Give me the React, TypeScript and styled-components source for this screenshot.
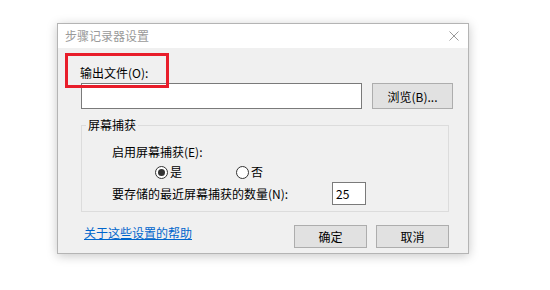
import styled, { createGlobalStyle } from 'styled-components';

const GlobalStyle = createGlobalStyle`
  html, body {
    margin: 0;
    padding: 0;
    background: #ffffff;
  }
  body {
    font-family: "Noto Sans CJK SC", "Noto Sans", sans-serif;
    font-size: 12px;
    color: #000000;
  }
`;

const App: React.FC = () => {
  return (
    <>
      <GlobalStyle />
      <Page>
        <Dialog>
          <TitleBar>
            <Title>步骤记录器设置</Title>
            <CloseIcon viewBox="0 0 10 10">
              <path d="M0.5 0.5 L9.5 9.5 M9.5 0.5 L0.5 9.5" />
            </CloseIcon>
          </TitleBar>

          <Body>
            <OutputLabel>
              输出文件(O):
              <Highlight />
            </OutputLabel>
            <FileRow>
              <TextBox />
              <BrowseButton>浏览(B)...</BrowseButton>
            </FileRow>

            <Group>
              <Legend>屏幕捕获</Legend>
              <GroupContent>
                <GroupLabel>启用屏幕捕获(E):</GroupLabel>
                <RadioRow>
                  <RadioOption>
                    <RadioCircle $checked />是
                  </RadioOption>
                  <RadioOption>
                    <RadioCircle />否
                  </RadioOption>
                </RadioRow>
                <CountRow>
                  <GroupLabel>要存储的最近屏幕捕获的数量(N):</GroupLabel>
                  <NumberBox>25</NumberBox>
                </CountRow>
              </GroupContent>
            </Group>

            <Footer>
              <HelpLink>关于这些设置的帮助</HelpLink>
              <Buttons>
                <Button>确定</Button>
                <Button>取消</Button>
              </Buttons>
            </Footer>
          </Body>
        </Dialog>
      </Page>
    </>
  );
};

const Page = styled.div`
  width: 550px;
  height: 290px;
  padding: 23px 0 0 57px;
  box-sizing: border-box;
`;

const Dialog = styled.div`
  width: 412px;
  height: 231px;
  box-sizing: border-box;
  border: 1px solid #b4b4b4;
  background: #f0f0f0;
  box-shadow: 0 2px 10px rgba(0, 0, 0, 0.22);
  display: flex;
  flex-direction: column;
`;

const TitleBar = styled.div`
  height: 24px;
  background: #ffffff;
  display: flex;
  align-items: center;
  justify-content: space-between;
  padding: 0 9px 0 7px;
  flex-shrink: 0;
`;

const Title = styled.span`
  color: #9a9a9a;
  font-size: 12px;
  line-height: 16px;
`;

const CloseIcon = styled.svg`
  width: 10px;
  height: 10px;
  stroke: #9a9a9a;
  stroke-width: 1;
  fill: none;
`;

const Body = styled.div`
  flex: 1;
  padding: 17px 14px 0 23px;
  display: flex;
  flex-direction: column;
`;

const OutputLabel = styled.div`
  position: relative;
  line-height: 16px;
  margin-left: -1px;
`;

const Highlight = styled.span`
  position: absolute;
  left: -15px;
  top: -12px;
  width: 104px;
  height: 35px;
  box-sizing: border-box;
  border: 3px solid #e81d2a;
  pointer-events: none;
`;

const FileRow = styled.div`
  display: flex;
  gap: 10px;
  margin-top: 2px;
`;

const TextBox = styled.div`
  width: 281px;
  height: 26px;
  box-sizing: border-box;
  background: #ffffff;
  border: 1px solid #7a7a7a;
`;

const Button = styled.div`
  width: 73px;
  height: 23px;
  box-sizing: border-box;
  border: 1px solid #adadad;
  background: #e1e1e1;
  display: flex;
  align-items: center;
  justify-content: center;
  font-size: 12px;
`;

const BrowseButton = styled(Button)`
  width: 81px;
  height: 26px;
`;

const Group = styled.fieldset`
  margin: 8px 0 0 0;
  width: 368px;
  box-sizing: border-box;
  border: 1px solid #dcdcdc;
  padding: 0;
  min-width: 0;
`;

const Legend = styled.legend`
  margin-left: 4px;
  padding: 0 2px;
  line-height: 16px;
  font-size: 12px;
`;

const GroupContent = styled.div`
  padding: 11px 0 6px 30px;
`;

const GroupLabel = styled.div`
  line-height: 16px;
`;

const RadioRow = styled.div`
  display: flex;
  margin: 4px 0 0 43px;
  height: 16px;
`;

const RadioOption = styled.div`
  display: flex;
  align-items: center;
  gap: 2px;
  width: 81px;
  line-height: 16px;
`;

const RadioCircle = styled.span<{ $checked?: boolean }>`
  width: 13px;
  height: 13px;
  box-sizing: border-box;
  border-radius: 50%;
  border: 1px solid #333333;
  background: #ffffff;
  display: inline-flex;
  align-items: center;
  justify-content: center;

  &::after {
    content: '';
    width: 7px;
    height: 7px;
    border-radius: 50%;
    background: ${(p) => (p.$checked ? '#333333' : 'transparent')};
  }
`;

const CountRow = styled.div`
  display: flex;
  align-items: center;
  justify-content: space-between;
  width: 254px;
  margin-top: 2px;
`;

const NumberBox = styled.div`
  width: 34px;
  height: 23px;
  box-sizing: border-box;
  border: 1px solid #7a7a7a;
  background: #ffffff;
  display: flex;
  align-items: center;
  padding-left: 3px;
`;

const Footer = styled.div`
  display: flex;
  justify-content: space-between;
  align-items: flex-start;
  width: 368px;
  margin-top: 13px;
`;

const HelpLink = styled.a`
  color: #0066cc;
  text-decoration: underline;
  line-height: 16px;
  margin: 0 0 0 3px;
  cursor: pointer;
`;

const Buttons = styled.div`
  display: flex;
  gap: 9px;
`;

export default App;
